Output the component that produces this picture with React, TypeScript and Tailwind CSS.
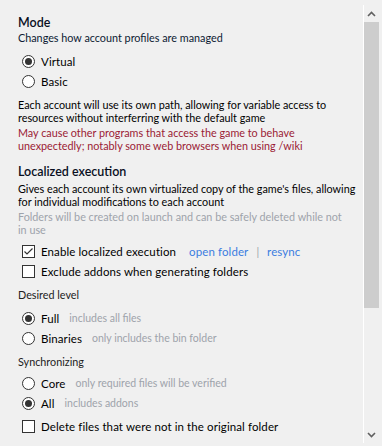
import React from "react";

function Radio({ checked }: { checked?: boolean }) {
  return (
    <span className="w-[13px] h-[13px] rounded-full border border-[#333] bg-white flex items-center justify-center shrink-0">
      {checked && <span className="w-[7px] h-[7px] rounded-full bg-[#333]" />}
    </span>
  );
}

function Check({ checked }: { checked?: boolean }) {
  return (
    <span className="w-[13px] h-[13px] border border-[#333] bg-white flex items-center justify-center shrink-0">
      {checked && (
        <svg width="11" height="11" viewBox="0 0 11 11" fill="none">
          <path d="M1.5 5.5 L4 8 L9.5 2.5" stroke="#333" strokeWidth="1.2" />
        </svg>
      )}
    </span>
  );
}

function RadioRow({ label, hint, checked }: { label: string; hint?: string; checked?: boolean }) {
  return (
    <div className="h-[20px] flex items-center ml-[4px]">
      <Radio checked={checked} />
      <span className="ml-[6px] text-black text-[11.5px] tracking-[0.1px]">{label}</span>
      {hint && <span className="ml-[10px] text-[#9ea3ab] text-[10.5px]">{hint}</span>}
    </div>
  );
}

function CheckRow({ label, checked, children }: { label: string; checked?: boolean; children?: React.ReactNode }) {
  return (
    <div className="h-[20px] flex items-center ml-[4px]">
      <Check checked={checked} />
      <span className="ml-[6px] text-black text-[11.5px] tracking-[0.1px]">{label}</span>
      {children}
    </div>
  );
}

export default function App() {
  return (
    <div
      className="w-[382px] h-[446px] bg-[#f0f0f0] flex overflow-hidden text-[10.8px] leading-[13px] whitespace-nowrap"
      style={{ fontFamily: 'Lato, "Noto Sans", sans-serif' }}
    >
      <div className="flex-1 min-w-0 overflow-hidden pl-[18px] pt-[15px]">
        {/* Mode */}
        <div className="h-[16px] leading-[16px] text-[12.5px] font-semibold text-[#0a0f1e]">Mode</div>
        <div className="text-[#0c1a33]">Changes how account profiles are managed</div>
        <div className="mt-[7px]">
          <RadioRow label="Virtual" checked />
          <RadioRow label="Basic" />
        </div>
        <div className="mt-[7px] text-black">
          Each account will use its own path, allowing for variable access to
          <br />
          resources without interferring with the default game
        </div>
        <div className="mt-[2px] text-[#9b1b35]">
          May cause other programs that access the game to behave
          <br />
          unexpectedly; notably some web browsers when using /wiki
        </div>

        {/* Localized execution */}
        <div className="mt-[12px] h-[16px] leading-[16px] text-[12.5px] font-semibold text-[#0a0f1e]">
          Localized execution
        </div>
        <div className="mt-[2px] text-black">
          Gives each account its own virtualized copy of the game's files, allowing
          <br />
          for individual modifications to each account
        </div>
        <div className="mt-[2px] text-[#9ea3ab]">
          Folders will be created on launch and can be safely deleted while not
          <br />
          in use
        </div>
        <div className="mt-[5px]">
          <CheckRow label="Enable localized execution" checked>
            <span className="ml-[13px] text-[#3b7de0] text-[11.5px] tracking-[0.1px]">open folder</span>
            <span className="mx-[8px] text-[#9ea3ab]">|</span>
            <span className="text-[#3b7de0] text-[11.5px] tracking-[0.1px]">resync</span>
          </CheckRow>
          <CheckRow label="Exclude addons when generating folders" />
        </div>

        <div className="mt-[7px] text-[#222]">Desired level</div>
        <div className="mt-[7px]">
          <RadioRow label="Full" hint="includes all files" checked />
          <RadioRow label="Binaries" hint="only includes the bin folder" />
        </div>

        <div className="mt-[7px] text-[#222]">Synchronizing</div>
        <div className="mt-[5px]">
          <RadioRow label="Core" hint="only required files will be verified" />
          <RadioRow label="All" hint="includes addons" checked />
        </div>
        <div className="mt-[3px]">
          <CheckRow label="Delete files that were not in the original folder" />
        </div>
      </div>

      {/* Scrollbar */}
      <div className="w-[19px] shrink-0 mt-[5px] mb-[3px] border-l border-white flex flex-col items-start">
        <div className="h-[17px] w-[15px] flex items-center justify-center">
          <svg width="9" height="6" viewBox="0 0 9 6">
            <path d="M1 5 L4.5 1.5 L8 5" stroke="#606060" strokeWidth="1.6" fill="none" />
          </svg>
        </div>
        <div className="w-[15px] h-[286px] bg-[#cdcdcd]" />
        <div className="flex-1" />
        <div className="h-[17px] w-[15px] flex items-center justify-center">
          <svg width="9" height="6" viewBox="0 0 9 6">
            <path d="M1 1 L4.5 4.5 L8 1" stroke="#606060" strokeWidth="1.6" fill="none" />
          </svg>
        </div>
      </div>
    </div>
  );
}
